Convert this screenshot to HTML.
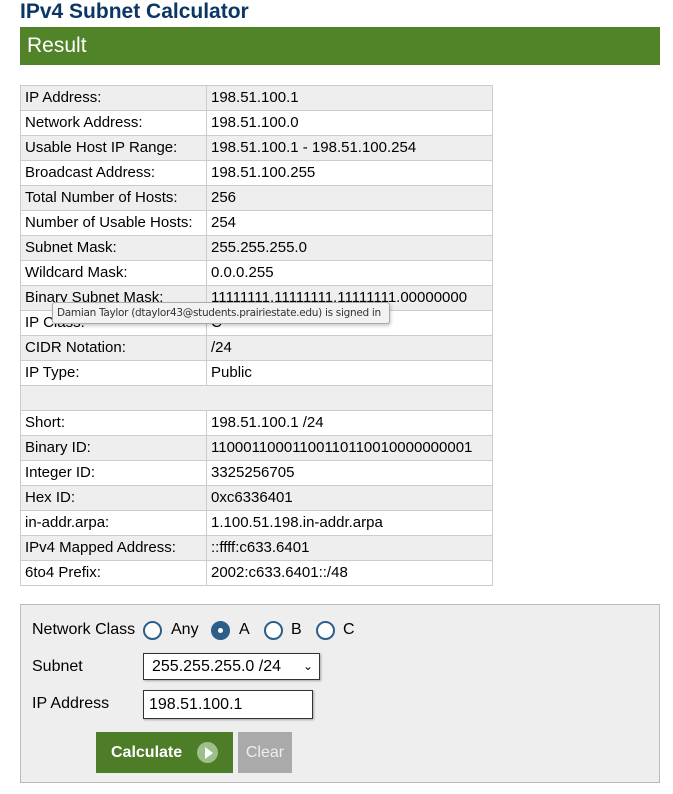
<!DOCTYPE html>
<html><head><style>
body{margin:0;background:#fff;font-family:"Liberation Sans",Arial,sans-serif;color:#000;position:relative;width:673px;height:794px;overflow:hidden}
h1{position:absolute;left:20px;top:0px;margin:0;font-size:21px;font-weight:bold;color:#0c3663}
.bar{position:absolute;left:20px;top:27px;width:640px;height:38px;background:#518329;color:#fff;font-size:21px;line-height:38px;box-sizing:border-box;padding-left:7px}
table{position:absolute;left:20px;top:85px;border-collapse:collapse;width:473px;font-size:15px}
td{border:1px solid #ccc;height:24px;padding:0 4px;line-height:24px;white-space:nowrap}
td:first-child{width:177px}
tr:nth-child(odd) td{background:#eee}
.tip{position:absolute;left:52px;top:302px;width:338px;height:22px;box-sizing:border-box;background:#f2f2f2;border:1px solid #aaa;border-radius:3px;font-size:10.5px;line-height:20px;padding-left:4px;color:#333;box-shadow:1px 2px 3px rgba(0,0,0,.2);font-family:"DejaVu Sans",sans-serif;letter-spacing:-0.3px;white-space:nowrap;overflow:hidden}
.form{position:absolute;left:20px;top:604px;width:640px;height:179px;box-sizing:border-box;background:#eee;border:1px solid #bbb;font-size:16px}
.lbl{position:absolute;left:11px}
.r{position:absolute;width:15px;height:15px;border:2px solid #2d5e8a;border-radius:50%;background:#fff;top:16px}
.sel{position:absolute;left:122px;top:48px;width:177px;height:27px;border:1px solid #333;background:#fff;box-sizing:border-box;padding-left:8px;line-height:25px;box-shadow:1px 1px 2px rgba(0,0,0,.3)}
.inp{position:absolute;left:122px;top:85px;width:170px;height:29px;border:1px solid #333;background:#fff;box-sizing:border-box;padding-left:5px;line-height:27px;box-shadow:1px 1px 2px rgba(0,0,0,.3)}
.calc{position:absolute;left:75px;top:127px;width:137px;height:41px;background:#4e7d27;color:#fff;font-weight:bold;line-height:41px;padding-left:15px;box-sizing:border-box}
.clear{position:absolute;left:217px;top:127px;width:54px;height:41px;background:#aaa;color:#eee;line-height:41px;text-align:center}
</style></head><body>
<h1>IPv4 Subnet Calculator</h1>
<div class="bar">Result</div>
<table>
<tr><td>IP Address:</td><td>198.51.100.1</td></tr>
<tr><td>Network Address:</td><td>198.51.100.0</td></tr>
<tr><td>Usable Host IP Range:</td><td>198.51.100.1 - 198.51.100.254</td></tr>
<tr><td>Broadcast Address:</td><td>198.51.100.255</td></tr>
<tr><td>Total Number of Hosts:</td><td>256</td></tr>
<tr><td>Number of Usable Hosts:</td><td>254</td></tr>
<tr><td>Subnet Mask:</td><td>255.255.255.0</td></tr>
<tr><td>Wildcard Mask:</td><td>0.0.0.255</td></tr>
<tr><td>Binary Subnet Mask:</td><td>11111111.11111111.11111111.00000000</td></tr>
<tr><td>IP Class:</td><td>C</td></tr>
<tr><td>CIDR Notation:</td><td>/24</td></tr>
<tr><td>IP Type:</td><td>Public</td></tr>
<tr><td colspan="2"></td></tr>
<tr><td>Short:</td><td>198.51.100.1 /24</td></tr>
<tr><td>Binary ID:</td><td>11000110001100110110010000000001</td></tr>
<tr><td>Integer ID:</td><td>3325256705</td></tr>
<tr><td>Hex ID:</td><td>0xc6336401</td></tr>
<tr><td>in-addr.arpa:</td><td>1.100.51.198.in-addr.arpa</td></tr>
<tr><td>IPv4 Mapped Address:</td><td>::ffff:c633.6401</td></tr>
<tr><td>6to4 Prefix:</td><td>2002:c633.6401::/48</td></tr>
</table>
<div class="tip">Damian Taylor (dtaylor43@students.prairiestate.edu) is signed in</div>
<div class="form">
<div class="lbl" style="top:16px">Network Class</div>
<div class="r" style="left:122px"></div><div class="lbl" style="left:150px;top:16px">Any</div>
<div class="r" style="left:190px;background:#2d5e8a"><div style="position:absolute;left:5px;top:5px;width:5px;height:5px;border-radius:50%;background:#fff"></div></div><div class="lbl" style="left:218px;top:16px">A</div>
<div class="r" style="left:243px"></div><div class="lbl" style="left:270px;top:16px">B</div>
<div class="r" style="left:295px"></div><div class="lbl" style="left:322px;top:16px">C</div>
<div class="lbl" style="top:53px">Subnet</div>
<div class="sel">255.255.255.0 /24<span style="position:absolute;right:6px;top:0;font-size:12px">&#8964;</span></div>
<div class="lbl" style="top:90px">IP Address</div>
<div class="inp">198.51.100.1</div>
<div class="calc">Calculate<span style="position:absolute;left:101px;top:10px;width:21px;height:21px;border-radius:50%;background:#9cc08a"><span style="position:absolute;left:8px;top:5px;border-left:8px solid #fff;border-top:6px solid transparent;border-bottom:6px solid transparent"></span></span></div>
<div class="clear">Clear</div>
</div>
</body></html>
